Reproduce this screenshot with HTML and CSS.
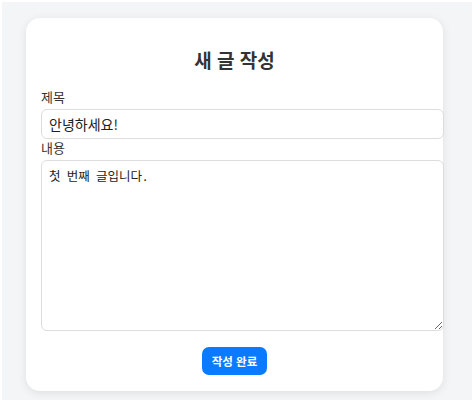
FILE: index.html
```html
<!DOCTYPE html>
<html lang="ko">
<head>
<meta charset="utf-8">
<title>새 글 작성</title>
<link rel="stylesheet" href="styles.css">
</head>
<body>
  <main class="page">
    <form class="card">
      <h2 class="card-title">새 글 작성</h2>
      <label class="field-label" for="title">제목</label>
      <input class="field-input" id="title" type="text" value="안녕하세요!">
      <label class="field-label" for="content">내용</label>
      <textarea class="field-textarea" id="content">첫 번째 글입니다.</textarea>
      <div class="actions">
        <button class="submit-btn" type="button">작성 완료</button>
      </div>
    </form>
  </main>
</body>
</html>
```

FILE: styles.css
```css
html {
  background: #ffffff;
}

body {
  margin: 2px;
  font-family: "Noto Sans CJK KR", "Noto Sans", sans-serif;
  color: #333333;
}

.page {
  background: #f4f5f7;
  height: 398px;
  padding-top: 16px;
  box-sizing: border-box;
}

.card {
  display: block;
  width: 417px;
  margin-left: 24px;
  box-sizing: border-box;
  padding: 16px 15px;
  background: #ffffff;
  border-radius: 14px;
  box-shadow: 0 2px 10px rgba(0, 0, 0, 0.09);
}

.card-title {
  margin: 14px 0 16px;
  font-size: 19px;
  line-height: 24px;
  font-weight: 700;
  text-align: center;
  color: #333333;
}

.field-label {
  display: block;
  font-size: 13px;
  line-height: 18px;
  margin-bottom: 3px;
  color: #333333;
}

.field-input,
.field-textarea {
  display: block;
  width: 100%;
  margin: 0;
  padding: 6px 7px;
  border: 1px solid #dddddd;
  border-radius: 6px;
  background: #ffffff;
  color: #222222;
}

.field-input {
  height: 30px;
  box-sizing: border-box;
  width: calc(100% + 16px);
  font-family: "Noto Sans CJK KR", sans-serif;
  font-size: 14px;
}

.field-textarea {
  height: 171px;
  box-sizing: border-box;
  width: calc(100% + 16px);
  font-family: "Noto Sans Mono CJK KR", "DejaVu Sans Mono", monospace;
  font-size: 12.5px;
  line-height: 17px;
  resize: vertical;
}

.actions {
  display: flex;
  justify-content: center;
  margin-top: 16px;
}

.submit-btn {
  height: 28px;
  padding: 0 10px;
  border: none;
  border-radius: 7px;
  background: #0a7bff;
  color: #ffffff;
  font-family: "Noto Sans CJK KR", sans-serif;
  font-size: 11.5px;
  font-weight: 700;
}
```
